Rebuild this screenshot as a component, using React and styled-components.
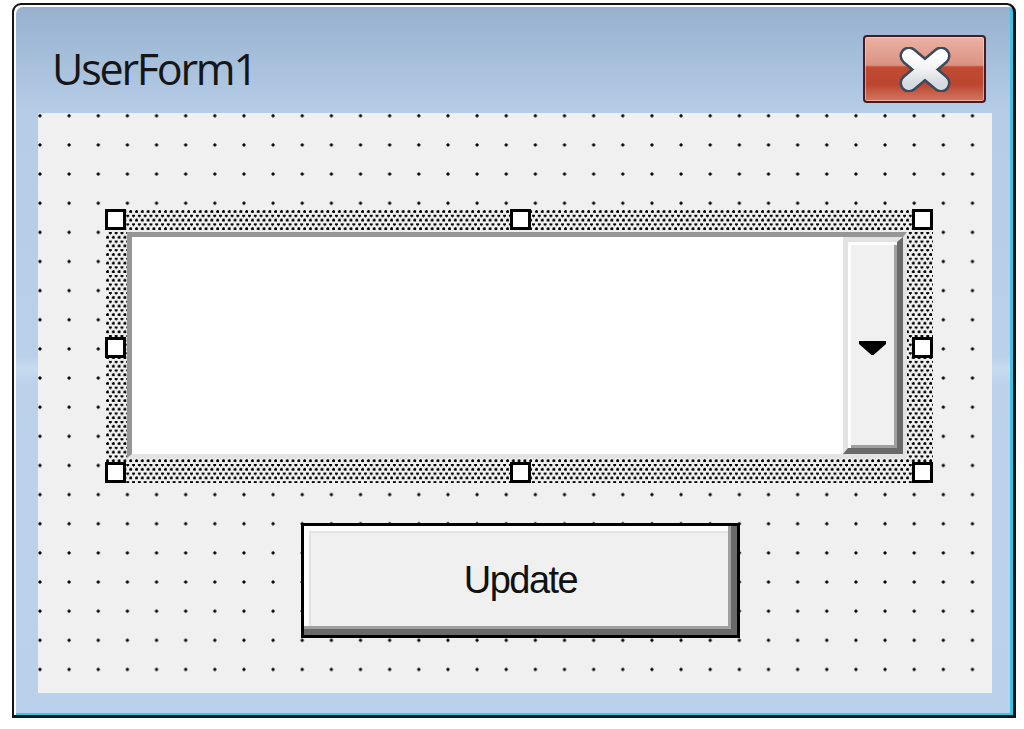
import React from "react";
import styled, { createGlobalStyle } from "styled-components";

const GlobalStyle = createGlobalStyle`
  html, body {
    margin: 0;
    padding: 0;
    background: #fff;
  }
  body {
    width: 1024px;
    height: 729px;
    overflow: hidden;
  }
`;

const Window = styled.div`
  box-sizing: border-box;
  margin: 3px 0 0 12px;
  width: 1004px;
  height: 715px;
  border-style: solid;
  border-color: #141414;
  border-width: 2px 3px 3px 2px;
  border-radius: 9px 9px 0 0;
  box-shadow: inset 2px 2px 0 #fbfdff, inset -3px -2px 0 #3cc4e4;
  background: linear-gradient(
    180deg,
    #97b0cd 0px,
    #a6bfdb 55px,
    #b6cde7 108px,
    #b9d0ea 350px,
    #c7dbef 364px,
    #bcd2eb 380px,
    #bad1eb 100%
  );
  display: flex;
  flex-direction: column;
`;

const TitleBar = styled.div`
  box-sizing: border-box;
  height: 108px;
  padding: 0 27px 0 38px;
  display: flex;
  justify-content: space-between;
  align-items: flex-start;
`;

const Title = styled.div`
  margin-top: 42px;
  color: #161616;
  font-family: "Open Sans", "Noto Sans", sans-serif;
  font-size: 43px;
  line-height: 1;
  letter-spacing: -2.2px;
`;

const CloseButton = styled.div`
  box-sizing: border-box;
  width: 123px;
  height: 68px;
  margin-top: 30px;
  border: 2px solid #4a1a22;
  border-radius: 4px;
  background: linear-gradient(
    180deg,
    #eab2a4 0%,
    #dc9282 44%,
    #c14a31 47%,
    #bb4630 74%,
    #d37762 100%
  );
  box-shadow: inset 0 0 0 1px rgba(255, 214, 204, 0.55);
  display: flex;
  align-items: center;
  justify-content: center;
`;

const ClientArea = styled.div`
  box-sizing: border-box;
  margin: 0 21px 0 24px;
  height: 580px;
  padding: 97px 0 0 68px;
  background-color: #f0f0f0;
  background-image: radial-gradient(circle, #000 1.4px, transparent 1.7px);
  background-size: 29.15px 29.15px;
  background-position: -12.6px -11.8px;
  display: flex;
  flex-direction: column;
  align-items: flex-start;
`;

const SelectionFrame = styled.div`
  position: relative;
  box-sizing: border-box;
  width: 827px;
  height: 273px;
  padding: 22px 26px 25px 21px;
  background-color: #f0f0f0;
  background-image: radial-gradient(circle at 1.5px 1.5px, #000 1.3px, transparent 1.5px),
    radial-gradient(circle at 4.4px 5.8px, #000 1.3px, transparent 1.5px);
  background-size: 5.8px 8.6px;
`;

const Handle = styled.div`
  position: absolute;
  box-sizing: border-box;
  width: 21px;
  height: 21px;
  border: 3px solid #000;
  background: #fff;
  left: ${(p) => (p.$x === "start" ? "-1px" : p.$x === "mid" ? "calc(50% - 10px)" : "auto")};
  right: ${(p) => (p.$x === "end" ? "0" : "auto")};
  top: ${(p) => (p.$y === "start" ? "-1px" : p.$y === "mid" ? "calc(50% - 10px)" : "auto")};
  bottom: ${(p) => (p.$y === "end" ? "0" : "auto")};
`;

const Combo = styled.div`
  box-sizing: border-box;
  height: 100%;
  display: flex;
  border-style: solid;
  border-width: 5px 4px 4px 5px;
  border-color: #969696 #e3e3e3 #e3e3e3 #969696;
  background: #fff;
`;

const TextField = styled.div`
  flex: 1;
`;

const DropButton = styled.div`
  box-sizing: border-box;
  width: 60px;
  padding-top: 6px;
  border-style: solid;
  border-width: 5px 6px 6px 5px;
  border-color: #e3e3e3 #696969 #696969 #e3e3e3;
  box-shadow: inset 3px 3px 0 #fff, inset -3px -3px 0 #a0a0a0;
  background: #f0f0f0;
  display: flex;
  align-items: center;
  justify-content: center;
`;

const UpdateButton = styled.div`
  box-sizing: border-box;
  width: 439px;
  height: 115px;
  margin: 40px 0 0 195px;
  border: 3px solid #000;
  background: #f0f0f0;
  box-shadow: inset -6px -6px 0 #696969, inset -9px -9px 0 #a0a0a0,
    inset 5px 5px 0 #fff, inset 7px 7px 0 #e3e3e3;
  display: flex;
  align-items: center;
  justify-content: center;
  color: #111;
  font-family: "Liberation Sans", Arial, sans-serif;
  font-size: 38px;
  letter-spacing: -1.5px;
`;

const CloseIcon = () => (
  <svg width="54" height="45" viewBox="0 0 54 45">
    <defs>
      <linearGradient id="xfill" x1="0" y1="0" x2="0" y2="1">
        <stop offset="0" stopColor="#ffffff" />
        <stop offset="0.5" stopColor="#f2f2f2" />
        <stop offset="1" stopColor="#d6dbe1" />
      </linearGradient>
    </defs>
    <g strokeLinecap="round">
      <path d="M11 9 L43 36 M43 9 L11 36" stroke="#3b4a5c" strokeWidth="19" />
      <path d="M11 9 L43 36 M43 9 L11 36" stroke="url(#xfill)" strokeWidth="14" />
    </g>
  </svg>
);

const Arrow = () => (
  <svg width="27" height="14" viewBox="0 0 27 14">
    <polygon points="0,0 27,0 27,3 14.5,14 12.5,14 0,3" fill="#000" />
  </svg>
);

const handles = [
  ["start", "start"],
  ["mid", "start"],
  ["end", "start"],
  ["start", "mid"],
  ["end", "mid"],
  ["start", "end"],
  ["mid", "end"],
  ["end", "end"],
];

const App = () => {
  return (
    <>
      <GlobalStyle />
      <Window>
        <TitleBar>
          <Title>UserForm1</Title>
          <CloseButton>
            <CloseIcon />
          </CloseButton>
        </TitleBar>
        <ClientArea>
          <SelectionFrame>
            <Combo>
              <TextField />
              <DropButton>
                <Arrow />
              </DropButton>
            </Combo>
            {handles.map(([x, y]) => (
              <Handle key={x + y} $x={x} $y={y} />
            ))}
          </SelectionFrame>
          <UpdateButton>Update</UpdateButton>
        </ClientArea>
      </Window>
    </>
  );
};

export default App;
